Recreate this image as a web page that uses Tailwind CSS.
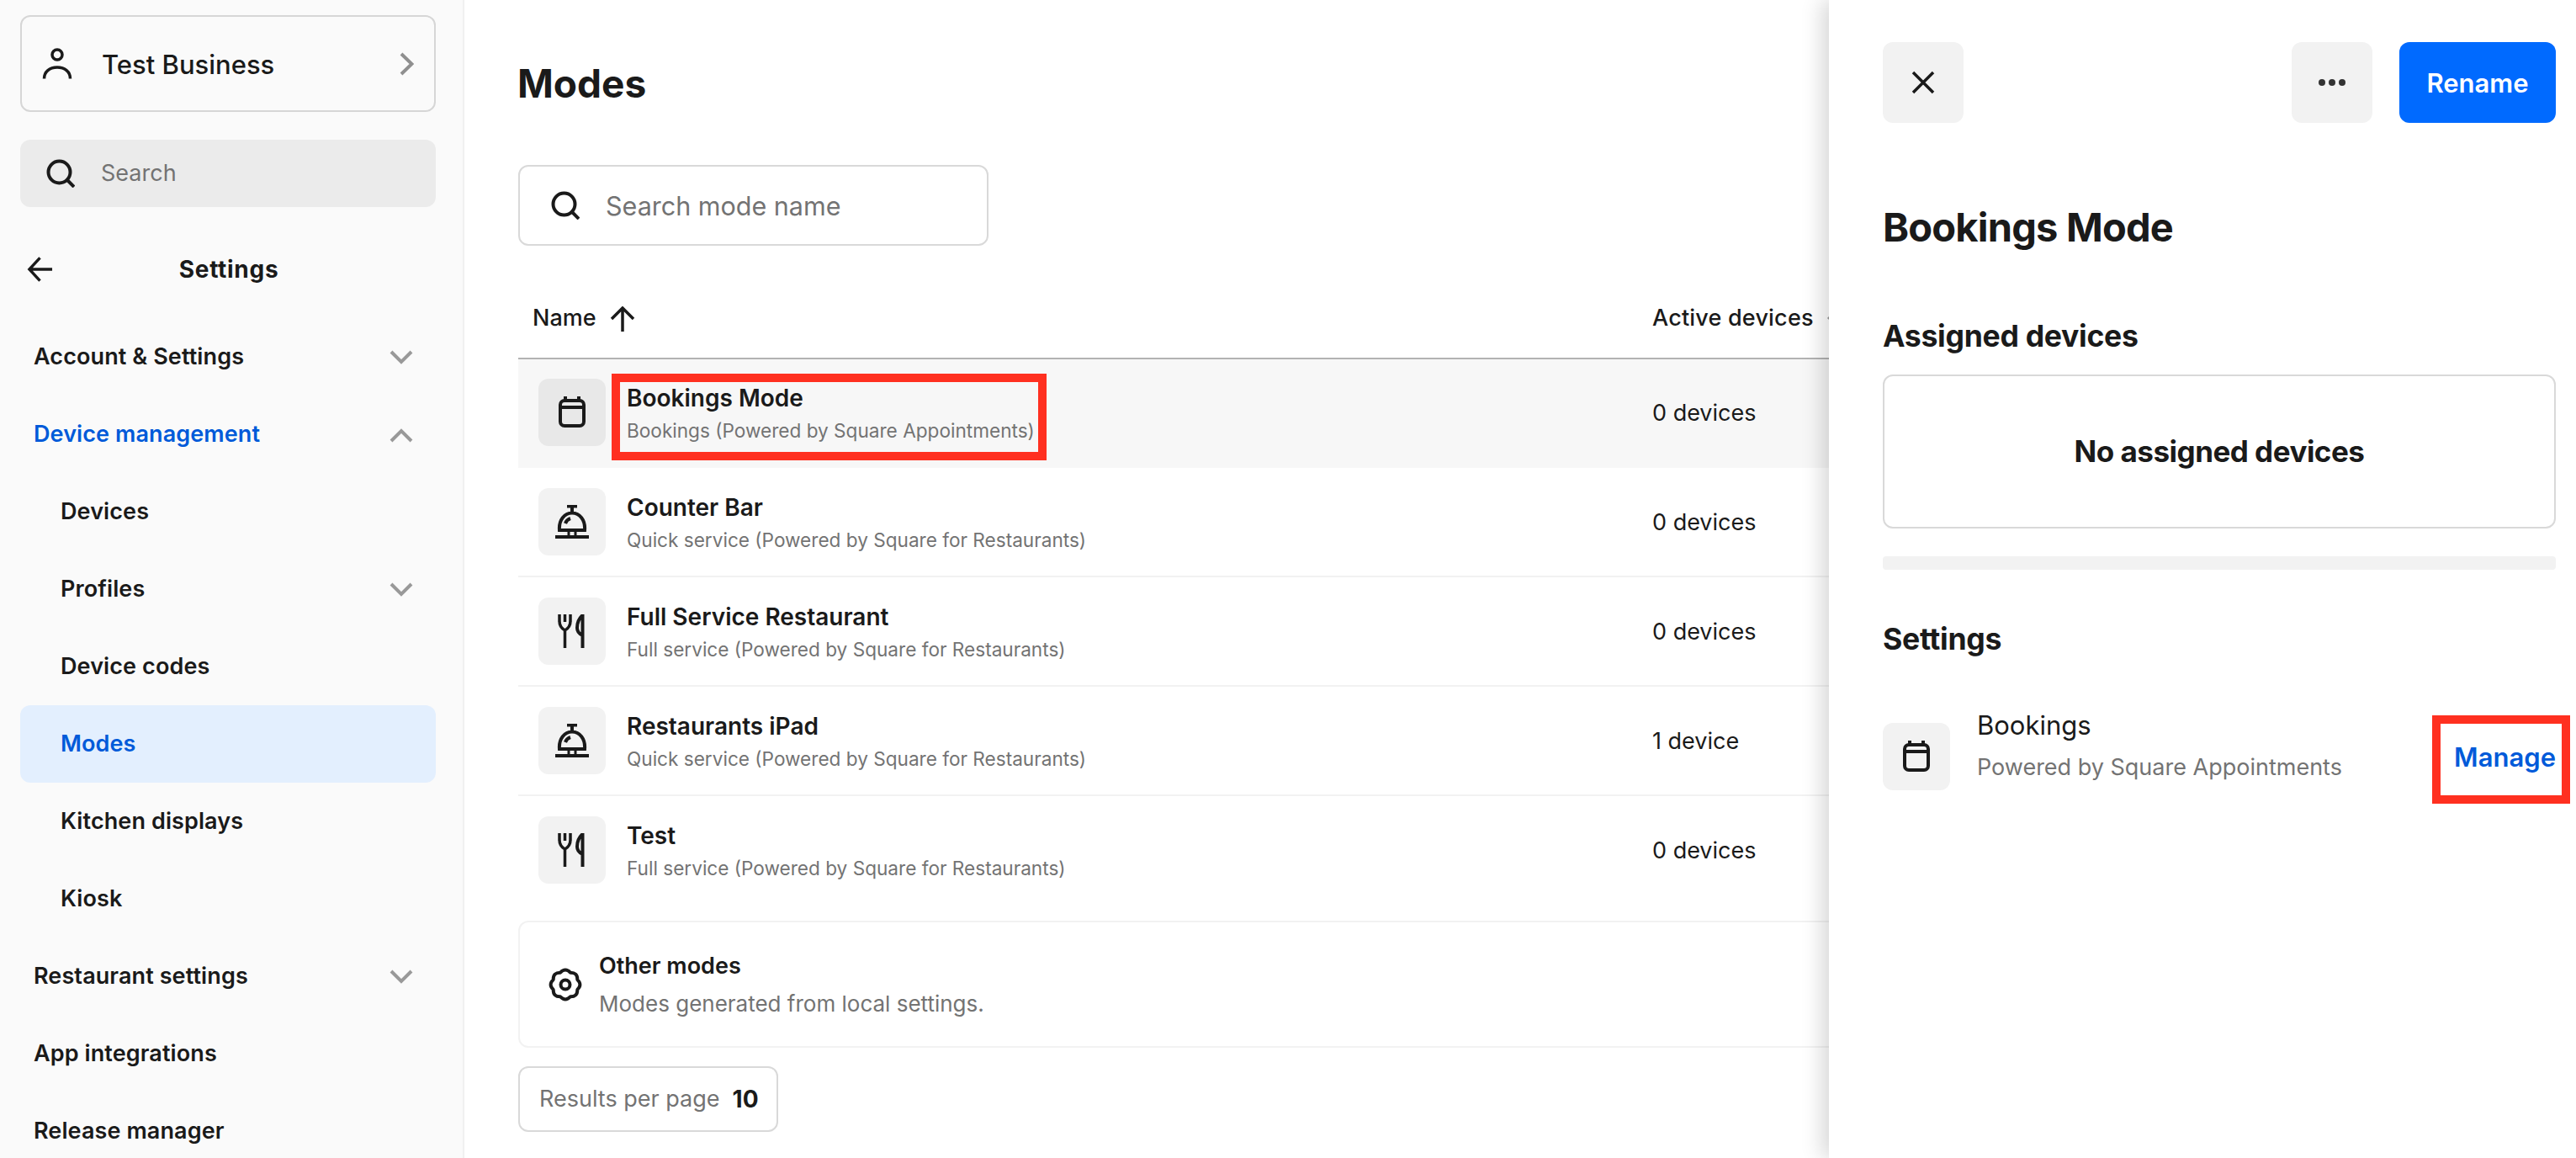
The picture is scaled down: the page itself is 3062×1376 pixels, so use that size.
<!DOCTYPE html>
<html lang="en">
  <head>
    <meta charset="UTF-8" />
    <meta name="viewport" content="width=device-width, initial-scale=1.0" />
    <title>Modes</title>
    <script src="https://cdn.jsdelivr.net/npm/@tailwindcss/browser@4"></script>
  </head>
  <body class="bg-white font-[Inter,sans-serif] text-[#1a1a1a]">
    <div class="relative flex h-[1376px] w-[3062px] overflow-hidden">
      <!-- Sidebar -->
      <aside class="h-full w-[552px] shrink-0 border-r-2 border-[#f0f0f0] bg-[#fafafa] pt-[18px]">
        <div class="mx-[24px] flex h-[115px] w-[494px] items-center rounded-[12px] border-2 border-[#d6d6d6] pl-[24px] pr-[24px]">
          <svg class="h-[40px] w-[36px]" viewBox="2 0 36 40" fill="none" stroke="#1a1a1a" stroke-width="3.5">
            <circle cx="20" cy="9" r="6" />
            <path d="M4.5 37.5C4.5 29 11 24 20 24S35.5 29 35.5 37.5" />
          </svg>
          <span class="ml-[35px] flex-1 pt-[3px] text-[31px] font-medium">Test Business</span>
          <svg class="h-[28px] w-[17px]" viewBox="0 0 17 28" fill="none" stroke="#8f8f8f" stroke-width="4">
            <path d="M2 2l12.5 12L2 26" />
          </svg>
        </div>
        <div class="mx-[24px] mt-[33px] flex h-[80px] w-[494px] items-center rounded-[12px] bg-[#ebebeb] pl-[31px]">
          <svg class="h-[34px] w-[34px]" viewBox="0 0 34 34" fill="none" stroke="#1a1a1a" stroke-width="4">
            <circle cx="15.5" cy="15.5" r="13" />
            <path d="M25 25l8 8" />
          </svg>
          <span class="ml-[31px] pt-[1px] text-[27px] text-[#737373]">Search</span>
        </div>
        <div class="relative mt-[34px] flex h-[80px] items-center justify-center pr-[6px]">
          <svg class="absolute left-[32px] top-[24px] h-[32px] w-[31px]" viewBox="0 0 32 32" fill="none" stroke="#1a1a1a" stroke-width="3.5">
            <path d="M31 16H3M16 2L3 16l13 14" />
          </svg>
          <span class="text-[28px] font-bold tracking-[0.7px]">Settings</span>
        </div>
        <nav class="mt-[18px] text-[27px] font-semibold tracking-[0.1px]">
          <div class="flex h-[92px] items-center justify-between pt-[1px] pl-[40px] pr-[59px]">
            <span>Account &amp; Settings</span>
            <svg class="h-[18px] w-[28px]" viewBox="0 0 28 18" fill="none" stroke="#999999" stroke-width="4"><path d="M2 2l12 12L26 2" /></svg>
          </div>
          <div class="flex h-[92px] items-center justify-between pt-[1px] pl-[40px] pr-[59px] text-[#005ad9]">
            <span>Device management</span>
            <svg class="h-[18px] w-[28px]" viewBox="0 0 28 18" fill="none" stroke="#999999" stroke-width="4"><path d="M2 16L14 4l12 12" /></svg>
          </div>
          <div class="flex h-[92px] items-center pt-[1px] pl-[72px]">Devices</div>
          <div class="flex h-[92px] items-center justify-between pt-[1px] pl-[72px] pr-[59px]">
            <span>Profiles</span>
            <svg class="h-[18px] w-[28px]" viewBox="0 0 28 18" fill="none" stroke="#999999" stroke-width="4"><path d="M2 2l12 12L26 2" /></svg>
          </div>
          <div class="flex h-[92px] items-center pt-[1px] pl-[72px]">Device codes</div>
          <div class="mx-[24px] flex h-[92px] w-[494px] items-center rounded-[12px] bg-[#e3effe] pt-[1px] pl-[48px] text-[#005ad9]">Modes</div>
          <div class="flex h-[92px] items-center pt-[1px] pl-[72px]">Kitchen displays</div>
          <div class="flex h-[92px] items-center pt-[1px] pl-[72px]">Kiosk</div>
          <div class="flex h-[92px] items-center justify-between pt-[1px] pl-[40px] pr-[59px]">
            <span>Restaurant settings</span>
            <svg class="h-[18px] w-[28px]" viewBox="0 0 28 18" fill="none" stroke="#999999" stroke-width="4"><path d="M2 2l12 12L26 2" /></svg>
          </div>
          <div class="flex h-[92px] items-center pt-[1px] pl-[40px]">App integrations</div>
          <div class="flex h-[92px] items-center pt-[1px] pl-[40px]">Release manager</div>
        </nav>
      </aside>

      <!-- Main -->
      <main class="min-w-0 flex-1 pl-[64px]">
        <div class="flex h-[196px] items-center pt-[2px]">
          <h1 class="text-[46px] font-bold -ml-[1px]">Modes</h1>
        </div>
        <div class="flex h-[96px] w-[559px] items-center rounded-[12px] border-2 border-[#d9d9d9] pl-[37px]">
          <svg class="h-[34px] w-[34px]" viewBox="0 0 34 34" fill="none" stroke="#1a1a1a" stroke-width="4">
            <circle cx="15.5" cy="15.5" r="13" />
            <path d="M25 25l8 8" />
          </svg>
          <span class="ml-[31px] pt-[2px] text-[30.5px] text-[#737373]">Search mode name</span>
        </div>

        <!-- Table -->
        <div class="mt-[38px] flex h-[97px] items-center border-b-2 border-[#b3b3b3] pt-[2px] text-[27px] font-medium">
          <div class="flex w-[1348px] items-center pl-[17px]">
            <span>Name</span>
            <svg class="ml-[16px] h-[30px] w-[30px]" viewBox="0 0 30 30" fill="none" stroke="#1a1a1a" stroke-width="3.5"><path d="M15 30V3M2 15L15 2l13 13" /></svg>
          </div>
          <span class="tracking-[0.2px]">Active devices</span>
          <svg class="ml-[14px] h-[24px] w-[24px]" viewBox="0 0 24 24" fill="none" stroke="#999999" stroke-width="3"><path d="M12 22V3M3 12l9-9 9 9" /></svg>
        </div>

        <div class="relative flex h-[129px] items-center bg-[#f7f7f7] pb-[3px]">
          <div class="flex w-[1348px] items-center pl-[24px]">
            <div class="flex h-[80px] w-[80px] items-center justify-center rounded-[12px] bg-[#e8e8e8]">
              <svg class="h-[40px] w-[40px]" viewBox="0 0 40 40" fill="none" stroke="#1a1a1a" stroke-width="4"><rect x="6" y="6" width="28" height="30" rx="5" /><path d="M6 14H34M12 1V6M28 1V6" /></svg>
            </div>
            <div class="ml-[25px] pt-[5px]">
              <div class="text-[28px] leading-[38px] font-semibold">Bookings Mode</div>
              <div class="text-[22.6px] leading-[40px] text-[#737373]">Bookings (Powered by Square Appointments)</div>
            </div>
          </div>
          <span class="pt-[3px] text-[27px]">0 devices</span>
          <div class="absolute left-[111px] top-[17px] h-[103px] w-[517px] border-[10px] border-[#ff3020]"></div>
        </div>

        <div class="flex h-[130px] items-center border-b-2 border-[#f2f2f2]">
          <div class="flex w-[1348px] items-center pl-[24px]">
            <div class="flex h-[80px] w-[80px] items-center justify-center rounded-[12px] bg-[#f2f2f2]">
              <svg class="h-[40px] w-[40px]" viewBox="0 0 40 40" fill="none" stroke="#1a1a1a" stroke-width="4"><path d="M14 1.5H26M20 2V10M5 30C4 18 11 9.5 20 9.5S36 18 35 30ZM12 22C13 19 15 17 18 16" /><path d="M16 30V38M24 30V38" stroke-width="3" /><path d="M0 38H40" /></svg>
            </div>
            <div class="ml-[25px] pt-[5px]">
              <div class="text-[28px] leading-[38px] font-semibold">Counter Bar</div>
              <div class="text-[22.6px] leading-[40px] text-[#737373]">Quick service (Powered by Square for Restaurants)</div>
            </div>
          </div>
          <span class="pt-[3px] text-[27px]">0 devices</span>
        </div>

        <div class="flex h-[130px] items-center border-b-2 border-[#f2f2f2]">
          <div class="flex w-[1348px] items-center pl-[24px]">
            <div class="flex h-[80px] w-[80px] items-center justify-center rounded-[12px] bg-[#f2f2f2]">
              <svg class="h-[40px] w-[40px]" viewBox="0 0 40 40" fill="none" stroke="#1a1a1a" stroke-width="4"><path d="M5 0V9M11.5 0V9M18 0V9M5 8C5 14 8 17 11.5 19 15 17 18 14 18 8M11.5 18V40" stroke-width="3.5" /><path d="M32.5 40V1C28 5 26 10 26 16 26 20 28 23 32.5 25" /></svg>
            </div>
            <div class="ml-[25px] pt-[5px]">
              <div class="text-[28px] leading-[38px] font-semibold">Full Service Restaurant</div>
              <div class="text-[22.6px] leading-[40px] text-[#737373]">Full service (Powered by Square for Restaurants)</div>
            </div>
          </div>
          <span class="pt-[3px] text-[27px]">0 devices</span>
        </div>

        <div class="flex h-[130px] items-center border-b-2 border-[#f2f2f2]">
          <div class="flex w-[1348px] items-center pl-[24px]">
            <div class="flex h-[80px] w-[80px] items-center justify-center rounded-[12px] bg-[#f2f2f2]">
              <svg class="h-[40px] w-[40px]" viewBox="0 0 40 40" fill="none" stroke="#1a1a1a" stroke-width="4"><path d="M14 1.5H26M20 2V10M5 30C4 18 11 9.5 20 9.5S36 18 35 30ZM12 22C13 19 15 17 18 16" /><path d="M16 30V38M24 30V38" stroke-width="3" /><path d="M0 38H40" /></svg>
            </div>
            <div class="ml-[25px] pt-[5px]">
              <div class="text-[28px] leading-[38px] font-semibold">Restaurants iPad</div>
              <div class="text-[22.6px] leading-[40px] text-[#737373]">Quick service (Powered by Square for Restaurants)</div>
            </div>
          </div>
          <span class="pt-[3px] text-[27px]">1 device</span>
        </div>

        <div class="flex h-[130px] items-center pb-[2px]">
          <div class="flex w-[1348px] items-center pl-[24px]">
            <div class="flex h-[80px] w-[80px] items-center justify-center rounded-[12px] bg-[#f2f2f2]">
              <svg class="h-[40px] w-[40px]" viewBox="0 0 40 40" fill="none" stroke="#1a1a1a" stroke-width="4"><path d="M5 0V9M11.5 0V9M18 0V9M5 8C5 14 8 17 11.5 19 15 17 18 14 18 8M11.5 18V40" stroke-width="3.5" /><path d="M32.5 40V1C28 5 26 10 26 16 26 20 28 23 32.5 25" /></svg>
            </div>
            <div class="ml-[25px] pt-[5px]">
              <div class="text-[28px] leading-[38px] font-semibold">Test</div>
              <div class="text-[22.6px] leading-[40px] text-[#737373]">Full service (Powered by Square for Restaurants)</div>
            </div>
          </div>
          <span class="pt-[3px] text-[27px]">0 devices</span>
        </div>

        <!-- Other modes -->
        <div class="mt-[18px] flex h-[151px] items-center rounded-[12px] border-2 border-[#f2f2f2] pl-[34px]">
          <svg class="h-[40px] w-[40px] overflow-visible" viewBox="0 0 40 40" fill="none" stroke="#1a1a1a" stroke-width="4" stroke-linejoin="round">
            <path d="M14.07 5.68Q20 -.5 25.93 5.68 34.5 5.5 34.32 14.07 40.5 20 34.32 25.93 34.5 34.5 25.93 34.32 20 40.5 14.07 34.32 5.5 34.5 5.68 25.93 -.5 20 5.68 14.07 5.5 5.5 14.07 5.68Z" />
            <circle cx="20" cy="20" r="5.5" />
          </svg>
          <div class="ml-[20px] pt-[2px]">
            <div class="text-[27px] leading-[40px] font-semibold">Other modes</div>
            <div class="mt-[5px] text-[26px] leading-[40px] text-[#737373]">Modes generated from local settings.</div>
          </div>
        </div>

        <div class="mt-[22px] flex h-[78px] w-[309px] items-center rounded-[12px] border-2 border-[#d9d9d9] pl-[23px]">
          <span class="text-[27px] text-[#737373]">Results per page</span>
          <span class="ml-[15px] text-[28px] font-bold">10</span>
        </div>
      </main>

      <!-- Mode details panel -->
      <section class="absolute top-0 right-0 bottom-0 w-[888px] bg-white pt-[50px] pr-[24px] pl-[64px] shadow-[-8px_0_24px_rgba(0,0,0,0.16)]">
        <div class="flex h-[96px] items-center">
          <div class="flex h-[96px] w-[96px] items-center justify-center rounded-[12px] bg-[#f2f2f2]">
            <svg class="h-[28px] w-[28px]" viewBox="0 0 28 28" fill="none" stroke="#1a1a1a" stroke-width="3.5"><path d="M2 2L26 26M26 2L2 26" /></svg>
          </div>
          <div class="ml-auto flex h-[96px] w-[96px] items-center justify-center rounded-[12px] bg-[#f2f2f2]">
            <svg class="h-[10px] w-[34px]" viewBox="0 0 34 10" fill="#333333"><circle cx="5" cy="5" r="4" /><circle cx="17" cy="5" r="4" /><circle cx="29" cy="5" r="4" /></svg>
          </div>
          <div class="ml-[32px] flex h-[96px] w-[186px] items-center justify-center rounded-[12px] bg-[#006aff] pt-[2px] text-[31px] font-semibold text-white">Rename</div>
        </div>
        <h2 class="mt-[74px] flex h-[100px] items-center text-[47px] font-bold tracking-[-0.8px]">Bookings Mode</h2>
        <h3 class="mt-[50px] flex h-[60px] items-center text-[35.6px] font-bold tracking-[-0.3px]">Assigned devices</h3>
        <div class="mt-[15px] flex h-[183px] items-center justify-center rounded-[12px] border-2 border-[#d9d9d9] text-[35px] font-bold tracking-[-0.5px]">No assigned devices</div>
        <div class="mt-[33px] h-[16px] rounded-[4px] bg-[#f2f2f2]"></div>
        <h3 class="mt-[53px] flex h-[60px] items-center text-[35.6px] font-bold tracking-[-0.3px]">Settings</h3>
        <div class="relative mt-[50px] flex h-[120px] items-center">
          <div class="mt-[19px] flex h-[80px] w-[80px] items-center justify-center self-start rounded-[12px] bg-[#f2f2f2]">
            <svg class="h-[40px] w-[40px]" viewBox="0 0 40 40" fill="none" stroke="#1a1a1a" stroke-width="4"><rect x="6" y="6" width="28" height="30" rx="5" /><path d="M6 14H34M12 1V6M28 1V6" /></svg>
          </div>
          <div class="ml-[32px] flex-1 self-start">
            <div class="text-[31px] leading-[44px]">Bookings</div>
            <div class="mt-[10px] text-[27px] leading-[36px] text-[#737373]">Powered by Square Appointments</div>
          </div>
          <span class="text-[31px] font-semibold text-[#005ad9]">Manage</span>
          <div class="absolute -right-[17px] top-[10px] h-[105px] w-[164px] border-[10px] border-[#ff3020]"></div>
        </div>
      </section>
    </div>
  </body>
</html>
